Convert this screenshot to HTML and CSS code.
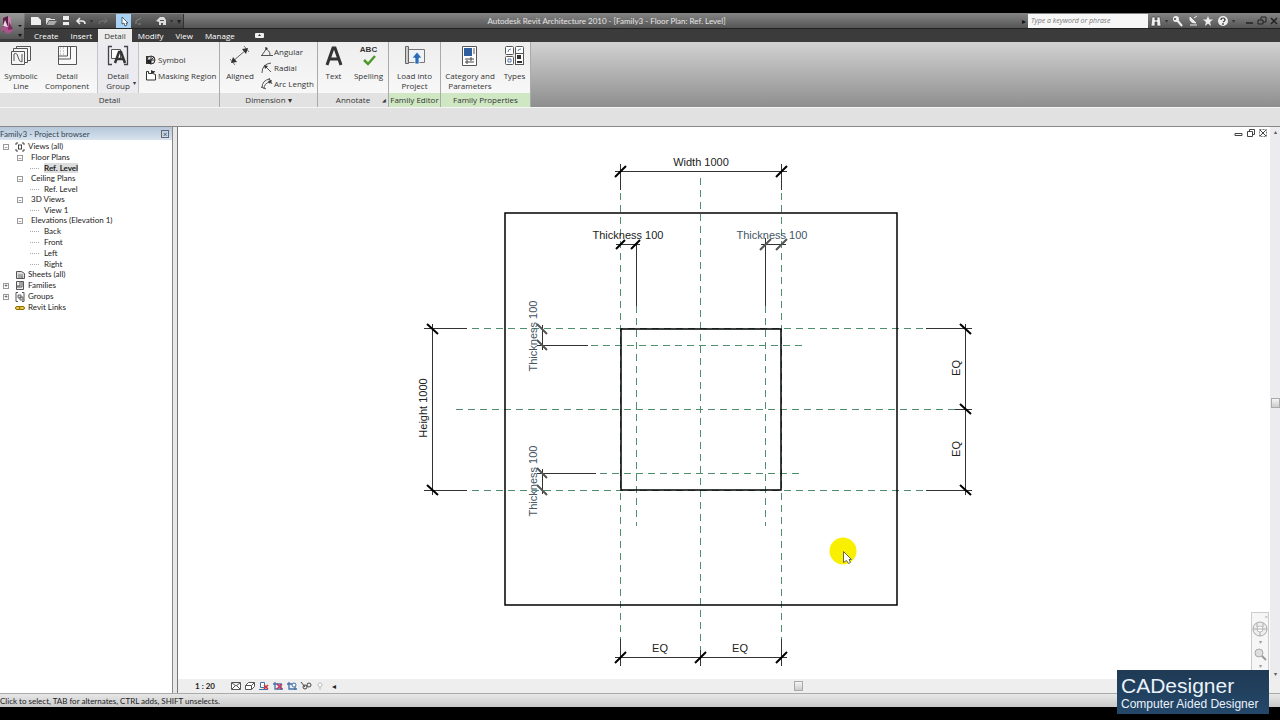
FILE: index.html
```html
<!DOCTYPE html>
<html lang="en">

<head>
    <meta charset="UTF-8">
    <title>Autodesk Revit Architecture 2010</title>
    <link rel="stylesheet" href="styles.css">
</head>

<body>
    <div class="app">
        <header class="titlebar">
            <div class="quick-access">
                <button aria-label="New"><svg width="12" height="10" viewBox="0 0 12 10"><path d="M1 1h7l3 3v5H1z" fill="#eee" /></svg></button>
                <button aria-label="Open"><svg width="12" height="10" viewBox="0 0 12 10"><path d="M1 9V2h4l1 1h4v1H4z" fill="#ddd" /><path d="M4 5h8l-3 4H2z" fill="#aaa" /></svg></button>
                <button aria-label="Save"><svg width="12" height="10" viewBox="0 0 12 10"><path d="M2 0h8v10H2z" fill="#555" /><path d="M3 0h6v4H3zM3 6h6v3H3z" fill="#eee" /></svg></button>
                <button aria-label="Undo"><svg width="12" height="10" viewBox="0 0 12 10"><path d="M2 5h5q3 0 3 3M5 2L2 5l3 3" fill="none" stroke="#eee" stroke-width="1.5" /></svg></button>
                <span class="sep">▾</span>
                <button aria-label="Redo" disabled><svg width="12" height="10" viewBox="0 0 12 10"><path d="M10 5H5Q2 5 2 8M8 2l2 3-3 2" fill="none" stroke="#777" /></svg></button>
                <button class="on" aria-label="Select"><svg width="12" height="12" viewBox="0 0 12 12"><path d="M4 2v7l2-1 1 3 2-1-1-2h2z" fill="#fff" stroke="#345" stroke-width="0.8" /></svg></button>
                <button aria-label="Measure"><svg width="12" height="10" viewBox="0 0 12 10"><path d="M3 8V5l5-3M5 8h3" fill="none" stroke="#888" /></svg></button>
                <span class="sep"></span>
                <button aria-label="Default 3D view"><svg width="12" height="10" viewBox="0 0 12 10"><path d="M1 5l4-4h4l2 3v5H4V6z" fill="#ddd" /><path d="M5 4h4v1H5zM6 7h2v2H6z" fill="#555" /></svg></button>
                <span class="sep">▾</span>
                <button class="more" aria-label="Customize">▾</button>
            </div>
            <h1 class="title">Autodesk Revit Architecture 2010 - [Family3 - Floor Plan: Ref. Level]</h1>
            <div class="info-center">
                <button class="arrow" aria-label="Collapse">▸</button>
                <input type="text" aria-label="Search" placeholder="Type a keyword or phrase">
                <button aria-label="Find"><svg width="12" height="12" viewBox="0 0 12 12"><path d="M2 2h3v3h2V2h3l1 9H7V7H5v4H1z" fill="#eee" stroke="#333" stroke-width="0.6" /></svg></button>
                <span class="sep">▾</span>
                <button aria-label="Subscription"><svg width="12" height="12" viewBox="0 0 12 12"><circle cx="4" cy="4" r="3" fill="#eee" /><circle cx="3" cy="4" r="1" fill="#444" /><path d="M5 5l5 6" stroke="#eee" stroke-width="2" /></svg></button>
                <button aria-label="Communication"><svg width="12" height="12" viewBox="0 0 12 12"><path d="M3 2q-1 6 6 6zM7 3l3-2M3 10h7" fill="#eee" stroke="#eee" /></svg></button>
                <button aria-label="Favorites"><svg width="12" height="12" viewBox="0 0 12 12"><path d="M6 1l1.500 3.500H11L8 7l1 4-3-2.500L3 11l1-4-3-2.500h3.500z" fill="#eee" /></svg></button>
                <button aria-label="Help"><svg width="12" height="12" viewBox="0 0 12 12"><circle cx="6" cy="6" r="5" fill="#eee" /><path d="M4 5q0-2 2-2t2 2q0 1-2 2M6 8v2" fill="none" stroke="#333" stroke-width="1.200" /></svg></button>
                <span class="sep">▾</span>
                <div class="window-buttons">
                    <button aria-label="Minimize"><svg width="10" height="10" viewBox="0 0 10 10"><path d="M1 7h7" stroke="#222" stroke-width="1.500" /></svg></button>
                    <button aria-label="Restore"><svg width="10" height="10" viewBox="0 0 10 10"><path d="M1 4h5v4H1zM4 4V1h5v5H6" fill="none" stroke="#222" /></svg></button>
                    <button aria-label="Close"><svg width="10" height="10" viewBox="0 0 10 10"><path d="M2 2l6 6M8 2L2 8" stroke="#222" stroke-width="1.500" /></svg></button>
                </div>
            </div>
        </header>

        <nav class="tabs">
            <button>Create</button>
            <button>Insert</button>
            <button class="active">Detail</button>
            <button>Modify</button>
            <button>View</button>
            <button>Manage</button>
            <button class="toggle" aria-label="Minimize ribbon"><svg width="9" height="5" viewBox="0 0 9 5"><rect width="9" height="5" rx="1" fill="#eee" /><path d="M3 3h3L4.500 1z" fill="#333" /></svg></button>
        </nav>
        <button class="app-menu" aria-label="Application menu"><svg width="24" height="25" viewBox="0 0 24 25">
                <path d="M3 4l5-2v13l-5 3z" fill="#5c1f45" /><path d="M8 2l3 2v10l-3 2z" fill="#c77fae" /><path d="M0 15l6-4 8 5-6 4z" fill="#a8558a" /><path d="M5 6l3 7-5-1z" fill="#f0d5e6" /><path d="M9 8l4 7-5 1z" fill="#7b2b5d" /><path d="M18 11h4l-2 2zM18 20h4l-2 3z" fill="#111" />
            </svg></button>

        <div class="ribbon">
            <section class="panel panel-detail">
                <div class="tools">
                    <button class="tool"><svg width="22" height="22" viewBox="0 0 22 22"><g fill="#f5f5f5" stroke="#555"><path d="M6.500 1.500h14v14h-14z" /><path d="M3.500 3.500h14v14h-14z" /><path d="M1.500 6.500h13v13h-13z" /></g><path d="M4 9q3-2 4 3t4 5M4 16V9M12 17V9" fill="none" stroke="#555" /></svg>Symbolic<br>Line</button>
                    <button class="tool"><svg width="22" height="22" viewBox="0 0 22 22"><path d="M2.500 1.500h18v18h-18z" fill="#f8f8f8" stroke="#555" /><path d="M11.500 2v9h-9M14.500 2v12h-12" fill="none" stroke="#555" /><path d="M4 3h1M7 3h1M4 6h1M7 6h1M4 9h1M7 9h1" stroke="#999" /></svg>Detail<br>Component</button>
                    <button class="tool tool-drop"><svg width="22" height="22" viewBox="0 0 22 22"><path d="M5 1.500H1.500v18H5M17 1.500h3.500v18H17" fill="none" stroke="#444" stroke-width="1.300" /><path d="M4.500 4.500h9v9h-9z" fill="#fff" stroke="#555" /><path d="M8 18l4-11h2l4 11M10 14h6" fill="none" stroke="#333" stroke-width="2.500" /></svg>Detail<br>Group<span class="caret">▾</span></button>
                    <div class="tool-list">
                        <button><svg width="12" height="12" viewBox="0 0 12 12"><path d="M1 2h6v8H1z" fill="#333" /><circle cx="6" cy="6" r="4" fill="#ddd" stroke="#333" /><path d="M6 2v8M2 6h8M6 6l3-3" stroke="#333" /><path d="M2 6a4 4 0 004 4V6z" fill="#222" /></svg>Symbol</button>
                        <button><svg width="12" height="12" viewBox="0 0 12 12"><path d="M1.500 1.500h2v2h3v-2h3l-2 2 3 1v5.500h-9z" fill="#fff" stroke="#333" /><path d="M6 0l4 2-4 2z" fill="#333" /></svg>Masking Region</button>
                    </div>
                </div>
                <h2>Detail</h2>
            </section>
            <section class="panel panel-dimension">
                <div class="tools">
                    <button class="tool"><svg width="22" height="22" viewBox="0 0 22 22"><path d="M3 17L18 4" stroke="#666" fill="none" /><path d="M1 14l5 6M15 1l5 6" stroke="#777" /><path d="M2 18l2-6 4 5zM19 3l-2 6-4-5z" fill="#333" /></svg>Aligned</button>
                    <div class="tool-list three">
                        <button><svg width="12" height="12" viewBox="0 0 12 12"><path d="M0 9.500h12M1 9l5-7M4 3q5 1 5 6" fill="none" stroke="#555" /><path d="M4 1l3 1-2 2z" fill="#333" /></svg>Angular</button>
                        <button><svg width="12" height="12" viewBox="0 0 12 12"><path d="M1 11Q1 2 10 1M4 4l6 6" fill="none" stroke="#555" /><path d="M3 3l4 1-3 3z" fill="#333" /></svg>Radial</button>
                        <button><svg width="12" height="12" viewBox="0 0 12 12"><path d="M3 11Q3 5 9 4M1 10Q1 2 9 1M8 0l3 6M0 9l5 2" fill="none" stroke="#555" /><path d="M7 3l4-1-2 4z" fill="#333" /></svg>Arc Length</button>
                    </div>
                </div>
                <h2>Dimension <span>▾</span></h2>
            </section>
            <section class="panel panel-annotate">
                <div class="tools">
                    <button class="tool"><svg width="22" height="22" viewBox="0 0 22 22"><path d="M4 20l6-17h2l6 17M7 14h8" fill="none" stroke="#333" stroke-width="3" /></svg>Text</button>
                    <button class="tool"><span class="abc">ABC</span><svg width="22" height="12" viewBox="0 0 22 12"><path d="M6 5l4 4 7-8" fill="none" stroke="#4c9a2e" stroke-width="2.500" /></svg>Spelling</button>
                </div>
                <h2>Annotate<span class="corner">◢</span></h2>
            </section>
            <section class="panel panel-editor green">
                <div class="tools">
                    <button class="tool"><svg width="22" height="22" viewBox="0 0 22 22"><path d="M2.500 4.500h18v13h-18z" fill="#eef3f8" stroke="#777" /><path d="M1.500 1.500h3v17h-3z" fill="#ccc" stroke="#666" /><path d="M13 7l5 6h-3v6h-4v-6H8z" fill="#2a6cb8" stroke="#fff" stroke-width="0.700" /></svg>Load into<br>Project</button>
                </div>
                <h2>Family Editor</h2>
            </section>
            <section class="panel panel-properties green">
                <div class="tools">
                    <button class="tool"><svg width="22" height="22" viewBox="0 0 22 22"><path d="M3.500 1.500h14v19h-14z" fill="#fff" stroke="#555" /><path d="M5 3h8v8H5z" fill="#2f5f9e" /><path d="M14 4h2M14 6h2M14 8h2" stroke="#555" /><path d="M6 14h9M6 17h9M12 12v4M8 15v4" stroke="#444" /></svg>Category and<br>Parameters</button>
                    <button class="tool"><svg width="22" height="22" viewBox="0 0 22 22"><g fill="#fff" stroke="#555"><rect x="1.500" y="1.500" width="8" height="8" rx="1" /><rect x="11.500" y="1.500" width="8" height="8" rx="1" /><rect x="1.500" y="11.500" width="8" height="8" rx="1" /><rect x="11.500" y="8.500" width="8" height="11" /></g><path d="M4 7q0-3 3-3M14 6q0-2 3-2M4 14h3v3H4z" fill="none" stroke="#567ba8" /><path d="M13 10h4v4h-4zM13 16h5v2h-5z" fill="#333" /></svg>Types</button>
                </div>
                <h2>Family Properties</h2>
            </section>
        </div>

        <div class="options-bar"></div>

        <main class="workspace">
            <aside class="browser">
                <div class="browser-head">
                    <h2>Family3 - Project browser</h2>
                    <button aria-label="Close">×</button>
                </div>
                <ul class="tree">
                    <li><button class="box" aria-label="Collapse">−</button><svg class="icon" width="10" height="10" viewBox="0 0 10 10"><path d="M1 3V1h2M7 1h2v2M9 7v2H7M3 9H1V7" fill="none" stroke="#444" /><rect x="3.500" y="3" width="3" height="4" fill="none" stroke="#444" /></svg>Views (all)
                        <ul>
                            <li><button class="box" aria-label="Collapse">−</button>Floor Plans
                                <ul>
                                    <li class="current"><span>Ref. Level</span></li>
                                </ul>
                            </li>
                            <li><button class="box" aria-label="Collapse">−</button>Ceiling Plans
                                <ul>
                                    <li>Ref. Level</li>
                                </ul>
                            </li>
                            <li><button class="box" aria-label="Collapse">−</button>3D Views
                                <ul>
                                    <li>View 1</li>
                                </ul>
                            </li>
                            <li><button class="box" aria-label="Collapse">−</button>Elevations (Elevation 1)
                                <ul>
                                    <li>Back</li>
                                    <li>Front</li>
                                    <li>Left</li>
                                    <li>Right</li>
                                </ul>
                            </li>
                        </ul>
                    </li>
                    <li><span class="box-space"></span><svg class="icon" width="10" height="10" viewBox="0 0 10 10"><path d="M1.500 1.500h5l3 2v5h-8z" fill="#ddd" stroke="#555" /><path d="M3 5h3M3 7h5M7 4v4" stroke="#777" /></svg>Sheets (all)</li>
                    <li><button class="box" aria-label="Expand">+</button><svg class="icon" width="10" height="10" viewBox="0 0 10 10"><path d="M1.500.500h7v8h-7z" fill="#eee" stroke="#555" /><path d="M5 1v4H2M7 1v5H2" fill="none" stroke="#555" /></svg>Families</li>
                    <li><button class="box" aria-label="Expand">+</button><svg class="icon" width="10" height="10" viewBox="0 0 10 10"><path d="M3 .500H1v9h2M7 .500h2v9H7" fill="none" stroke="#555" /><path d="M3 3h3v3H3zM5 5h3v3H5z" fill="#ddd" stroke="#666" /></svg>Groups</li>
                    <li><span class="box-space"></span><svg class="icon" width="10" height="10" viewBox="0 0 10 10"><rect x="0.500" y="3.500" width="5" height="3" rx="1.500" fill="#ecc94b" stroke="#8a6d00" /><rect x="4.500" y="3.500" width="5" height="3" rx="1.500" fill="#ecc94b" stroke="#8a6d00" /></svg>Revit Links</li>
                </ul>
            </aside>

            <div class="view">
                <div class="canvas">
                    <svg class="drawing" viewBox="178 127 1092 552" role="img" aria-label="Floor plan of the family">
                        <!-- reference planes -->
                        <g class="plane">
                            <path d="M620.500 193V642" />
                            <path d="M700.500 178V652" />
                            <path d="M781.500 193V642" />
                            <path d="M636.500 306V526" />
                            <path d="M765.500 306V526" />
                            <path d="M472 328.500H926" />
                            <path d="M591 345.500H802" />
                            <path d="M456 409.500H960" />
                            <path d="M600 473.500H802" />
                            <path d="M472 490.500H926" />
                        </g>
                        <!-- solid geometry -->
                        <rect class="solid" x="505" y="213" width="392" height="392" />
                        <rect class="solid" x="621" y="329" width="160" height="161" />
                        <!-- dimension lines -->
                        <g class="dim">
                            <path d="M615 171.500H787M620.500 164V190M781.500 164V190" />
                            <path d="M615 657.500H787M620.500 639V666M700.500 650V666M781.500 639V666" />
                            <path d="M616 244.500H640M636.500 244V306M761 244.500H786M765.500 238V306" />
                            <path d="M432.500 324V495M424 328.500H467M424 490.500H467" />
                            <path d="M965.500 324V495M926 328.500H972M955 409.500H972M926 490.500H972" />
                            <path d="M542.500 325V350M537 345.500H588M542.500 469V494M537 473.500H596" />
                        </g>
                        <g class="tick">
                            <path d="M615 177L626 166M776 177L787 166M615 663L626 652M695 663L706 652M776 663L787 652" />
                            <path d="M616 249L625 240M631 249L640 240" />
                            <path d="M427 324L438 334M427 485L438 495M960 324L971 334M960 404L971 414M960 485L971 495" />
                        </g>
                        <g class="tick light">
                            <path d="M760 250L771 239M776 250L787 239" />
                            <path d="M537 324L547 334M537 340L547 350M537 468L547 478M537 485L547 495" />
                        </g>
                        <g class="label">
                            <text x="701" y="166">Width 1000</text>
                            <text x="628" y="239">Thickness 100</text>
                            <text class="blue" x="772" y="239">Thickness 100</text>
                            <text x="660" y="652">EQ</text>
                            <text x="740" y="652">EQ</text>
                            <text transform="translate(427 408) rotate(-90)">Height 1000</text>
                            <text class="blue" transform="translate(537 336) rotate(-90)">Thickness 100</text>
                            <text class="blue" transform="translate(537 481) rotate(-90)">Thickness 100</text>
                            <text transform="translate(960 368) rotate(-90)">EQ</text>
                            <text transform="translate(960 449) rotate(-90)">EQ</text>
                        </g>
                        <!-- mouse pointer -->
                        <circle cx="843" cy="551" r="13.500" fill="#f8f000" />
                        <path d="M843.500 551.500v11l3-2 2 3 2-1-1.500-3h2.500z" fill="#fff" stroke="#665" />
                    </svg>
                    <div class="mdi-buttons">
                        <button aria-label="Minimize"><svg width="10" height="10" viewBox="0 0 10 10"><path d="M1 5.500h7v2H1z" fill="#fff" stroke="#444" /></svg></button>
                        <button aria-label="Restore"><svg width="10" height="10" viewBox="0 0 10 10"><path d="M1.500 3.500h5v5h-5zM3.500 3V1.500h5v5H7" fill="#fff" stroke="#444" /></svg></button>
                        <button aria-label="Close"><svg width="10" height="10" viewBox="0 0 10 10"><path d="M1.500 1.500h7v7h-7z" fill="#fff" stroke="#777" stroke-dasharray="2 1" /><path d="M2 2l6 6M8 2L2 8" stroke="#444" /></svg></button>
                    </div>
                    <div class="navbar">
                        <button class="nav-close" aria-label="Close">×</button>
                        <button aria-label="Steering wheel"><svg width="16" height="16" viewBox="0 0 16 16"><circle cx="8" cy="8" r="7" fill="#eee" stroke="#aaa" /><circle cx="8" cy="8" r="3" fill="#fff" stroke="#bbb" /><path d="M1 8h14M8 11v4M5 2v4M11 2v4" stroke="#aaa" /></svg></button>
                        <span>▾</span>
                        <button aria-label="Zoom"><svg width="16" height="14" viewBox="0 0 16 14"><circle cx="7" cy="6" r="4" fill="#ddd" stroke="#aaa" /><path d="M10 9l4 4" stroke="#999" stroke-width="2" /></svg></button>
                        <span>▾</span>
                    </div>
                </div>
                <div class="vscroll"><span class="up">▴</span><span class="thumb"></span><span class="down">▾</span></div>
                <div class="view-bar">
                    <button class="scale">1 : 20</button>
                    <button aria-label="Detail level"><svg width="12" height="10" viewBox="0 0 12 10"><path d="M1.500 1.500h9v7h-9zM2 2l4 3 4-3M2 8l3-3M10 8L7 5" fill="#fff" stroke="#555" /></svg></button>
                    <button aria-label="Visual style"><svg width="12" height="10" viewBox="0 0 12 10"><path d="M1.500 4.500h6v4h-6zM1.500 4.500l3-3h6v4l-3 3M7.500 4.500l3-3" fill="#fff" stroke="#555" /></svg></button>
                    <button aria-label="Shadows"><svg width="12" height="10" viewBox="0 0 12 10"><path d="M2.500 1.500h4v5h-4zM1 8.500h9" fill="#fff" stroke="#4470a8" /><path d="M6 4l4 4M10 4L6 8" stroke="#c33" stroke-width="1.500" /></svg></button>
                    <button aria-label="Crop view"><svg width="12" height="10" viewBox="0 0 12 10"><path d="M3 1v7h8M1 3h8v6" fill="none" stroke="#4470a8" stroke-width="1.300" /><path d="M5 3l5 5M10 3L5 8" stroke="#c35" stroke-width="1.500" /></svg></button>
                    <button aria-label="Crop region"><svg width="12" height="10" viewBox="0 0 12 10"><path d="M3 1v7h8M1 3h8v6" fill="none" stroke="#4470a8" stroke-width="1.300" /><circle cx="8" cy="4" r="2" fill="#fff" stroke="#47a" /></svg></button>
                    <button aria-label="Hide or isolate"><svg width="12" height="10" viewBox="0 0 12 10"><path d="M1 1l4 5" stroke="#444" /><circle cx="5" cy="6" r="2" fill="none" stroke="#444" /><circle cx="9" cy="4" r="2" fill="none" stroke="#444" /></svg></button>
                    <button aria-label="Reveal hidden"><svg width="12" height="10" viewBox="0 0 12 10"><circle cx="6" cy="4" r="2" fill="#fff" stroke="#bbb" /><path d="M6 6v3" stroke="#bbb" /></svg></button>
                    <button aria-label="Scroll left">◂</button>
                    <div class="hscroll"><span class="thumb"></span></div>
                </div>
            </div>
        </main>

        <footer class="status">Click to select, TAB for alternates, CTRL adds, SHIFT unselects.</footer>
    </div>

    <div class="watermark">
        <strong>CADesigner</strong>
        <span>Computer Aided Designer</span>
    </div>
</body>

</html>
```
FILE: styles.css
```css
* {
    box-sizing: border-box;
}

body {
    margin: 0;
    background: #000;
    color: #222;
    font-family: Lato, 'Open Sans', sans-serif;
    font-size: 8px;
    line-height: 10px;
}

h1,
h2,
ul {
    margin: 0;
    padding: 0;
    font-size: inherit;
    font-weight: normal;
    list-style: none;
}

button {
    display: flex;
    align-items: center;
    justify-content: center;
    margin: 0;
    padding: 0;
    border: 0;
    background: none;
    color: inherit;
    font: inherit;
}

svg {
    display: block;
    flex: none;
}

.app {
    position: relative;
    display: flex;
    flex-direction: column;
    height: 100vh;
    padding: 13px 0;
}

/* title bar */
.titlebar {
    display: flex;
    align-items: center;
    flex: none;
    height: 16px;
    padding-left: 25px;
    background: linear-gradient(#858585, #555);
    border-bottom: 1px solid #222;
}

.quick-access {
    display: flex;
    align-items: center;
    width: 159px;
    height: 14px;
    padding-left: 3px;
    background: linear-gradient(#6a6a6a, #444);
    border-right: 1px solid #333;
}

.quick-access button {
    width: 15px;
    height: 14px;
}

.quick-access .on {
    margin-left: 6px;
    background: #a9d2f5;
}

.quick-access .more {
    width: 8px;
}

.sep {
    width: 7px;
    color: #333;
    font-size: 6px;
    text-align: center;
}

.title {
    flex: 1;
    padding-left: 10px;
    color: #e4e4e4;
    text-align: center;
}

.info-center {
    display: flex;
    align-items: center;
    width: 261px;
    height: 15px;
    color: #111;
}

.info-center button {
    width: 15px;
}

.info-center .arrow {
    width: 9px;
}

.info-center input {
    width: 120px;
    height: 14px;
    padding: 0 3px;
    border: 0;
    background: #f7f7f7;
    font: italic 7px 'Open Sans', sans-serif;
}

.info-center input::placeholder {
    color: #777;
}

.window-buttons {
    display: flex;
    flex: 1;
    justify-content: flex-end;
}

.window-buttons button {
    width: 12px;
}

.app-menu {
    position: absolute;
    top: 13px;
    left: 0;
    width: 24px;
    height: 26px;
    background: linear-gradient(#999, #555);
}

/* ribbon tabs */
.tabs {
    display: flex;
    flex: none;
    height: 13px;
    padding-left: 28px;
    background: #3b3b3b;
    color: #fff;
    font-family: 'Open Sans', sans-serif;
}

.tabs button {
    padding: 0 6px;
}

.tabs .active {
    background: #ececec;
    color: #333;
}

.tabs .toggle {
    margin-left: 8px;
}

/* ribbon */
.ribbon {
    display: flex;
    flex: none;
    height: 65px;
    background: linear-gradient(#d2d2d2, #8e8e8e);
    font-family: 'Open Sans', sans-serif;
}

.panel {
    display: flex;
    flex-direction: column;
    flex: none;
    border-right: 1px solid #aaa;
    background: linear-gradient(#eee, #fafafa);
    color: #333;
}

.tools {
    display: grid;
    flex: 1;
}

.panel h2 {
    position: relative;
    height: 14px;
    background: #e2e2e2;
    line-height: 14px;
    text-align: center;
    white-space: nowrap;
}

.green h2 {
    background: #cfe8c3;
}

.panel-detail .tools {
    grid-template-columns: 42px 50px 47px 80px;
}

.panel-dimension .tools {
    grid-template-columns: 40px 57px;
}

.panel-annotate .tools {
    grid-template-columns: 31px 39px;
}

.panel-editor .tools {
    grid-template-columns: 51px;
}

.panel-properties .tools {
    grid-template-columns: 58px 31px;
}

.tool {
    position: relative;
    flex-direction: column;
    justify-content: flex-start;
    padding-top: 3px;
    white-space: nowrap;
}

.tool svg {
    margin-bottom: 4px;
}

.tool-drop {
    margin-left: 5px;
    border: solid #c4c4c4;
    border-width: 0 1px;
    background: #ebebf0;
}

.caret {
    position: absolute;
    right: 2px;
    bottom: 5px;
    font-size: 6px;
}

.tool-list {
    display: flex;
    flex-direction: column;
    gap: 4px;
    padding: 12px 0 0 6px;
}

.tool-list.three {
    padding: 4px 0 0 1px;
}

.tool-list button {
    justify-content: flex-start;
    gap: 1px;
    height: 12px;
    white-space: nowrap;
}

.abc {
    height: 10px;
    font-family: 'Liberation Sans', sans-serif;
    font-weight: bold;
}

.corner {
    position: absolute;
    right: 2px;
    font-size: 5px;
}

.options-bar {
    flex: none;
    height: 20px;
    border-top: 1px solid #f5f5f5;
    border-bottom: 1px solid #888;
    background: #e1e1e1;
}

/* workspace */
.workspace {
    display: flex;
    flex: 1;
    gap: 4px;
    min-height: 0;
    background: #e8e8e8;
}

.browser {
    width: 173px;
    border-right: 1px solid #888;
    background: #fff;
}

.browser-head {
    display: flex;
    align-items: center;
    justify-content: space-between;
    height: 13px;
    padding-right: 3px;
    background: linear-gradient(#b5c7d9, #d8e3ee);
    color: #345;
}

.browser-head button {
    width: 8px;
    height: 8px;
    border: 1px solid #667;
}

.tree {
    padding: 1px 0 0 3px;
    line-height: 11px;
    color: #222;
}

.tree ul {
    margin-bottom: -1px;
    padding-left: 14px;
}

.tree ul ul {
    margin-left: 5px;
    padding-left: 8px;
}

.tree ul ul li::before {
    content: '';
    display: inline-block;
    width: 9px;
    margin-right: 5px;
    border-top: 1px dotted #aaa;
    vertical-align: middle;
}

.tree .icon {
    display: inline-block;
    margin: -1px 3px -1px 0;
    vertical-align: middle;
}

.box,
.box-space {
    display: inline-block;
    width: 6px;
    height: 6px;
    margin-right: 6px;
    vertical-align: middle;
}

.tree ul .box {
    margin-right: 8px;
}

.box {
    border: 1px solid #999;
    font-size: 6px;
    line-height: 4px;
}

.current span {
    background: #ddd;
    font-weight: bold;
}

.view {
    display: grid;
    flex: 1;
    grid-template-columns: 1fr 10px;
    grid-template-rows: 1fr 14px;
    min-width: 0;
    border-left: 1px solid #777;
    background: #fff;
}

.canvas {
    position: relative;
    min-height: 0;
}

.drawing {
    width: 100%;
    height: 100%;
}

.plane path {
    fill: none;
    stroke: #4f8f70;
    stroke-dasharray: 7 5;
}

.solid {
    fill: none;
    stroke: #000;
    stroke-width: 1.5px;
}

.dim path {
    fill: none;
    stroke: #333;
}

.tick path {
    stroke: #000;
    stroke-width: 2px;
}

.tick.light path {
    stroke: #555;
}

.label text {
    fill: #222;
    font-family: 'Liberation Sans', sans-serif;
    font-size: 11px;
    text-anchor: middle;
}

.label .blue {
    fill: #456;
}

.mdi-buttons {
    position: absolute;
    top: 1px;
    right: 2px;
    display: flex;
    gap: 2px;
}

.navbar {
    position: absolute;
    right: 1px;
    bottom: 0;
    display: flex;
    flex-direction: column;
    align-items: center;
    width: 18px;
    height: 67px;
    border: 1px solid #ccc;
    background: #f6f6f6;
    color: #999;
    font-size: 6px;
}

.nav-close {
    align-self: flex-end;
    height: 8px;
}

.vscroll {
    display: flex;
    flex-direction: column;
    align-items: center;
    justify-content: space-between;
    background: #ececee;
    color: #555;
    font-size: 6px;
}

.thumb {
    width: 9px;
    height: 10px;
    border: 1px solid #aaa;
    background: linear-gradient(#f5f5f5, #ccc);
}

.view-bar {
    display: flex;
    align-items: center;
    grid-column: 1 / -1;
    padding-left: 13px;
    background: #eee;
}

.view-bar button {
    width: 14px;
}

.view-bar .scale {
    width: 28px;
    margin-right: 10px;
    font-weight: bold;
}

.hscroll {
    display: flex;
    flex: 1;
    justify-content: center;
    padding-right: 24px;
}

.status {
    flex: none;
    height: 14px;
    border-top: 1px solid #aaa;
    background: linear-gradient(#e8e8e8, #c8c8c8);
    line-height: 14px;
}

.watermark {
    position: absolute;
    right: 11px;
    bottom: 6px;
    display: flex;
    flex-direction: column;
    width: 152px;
    height: 44px;
    padding: 5px 0 0 4px;
    background: linear-gradient(#1f3a54, #24486a);
    color: #eaf2fa;
    font-family: 'Liberation Sans', sans-serif;
    font-size: 12px;
    line-height: 16px;
}

.watermark strong {
    font-size: 21px;
    font-weight: normal;
    line-height: 21px;
}
```
